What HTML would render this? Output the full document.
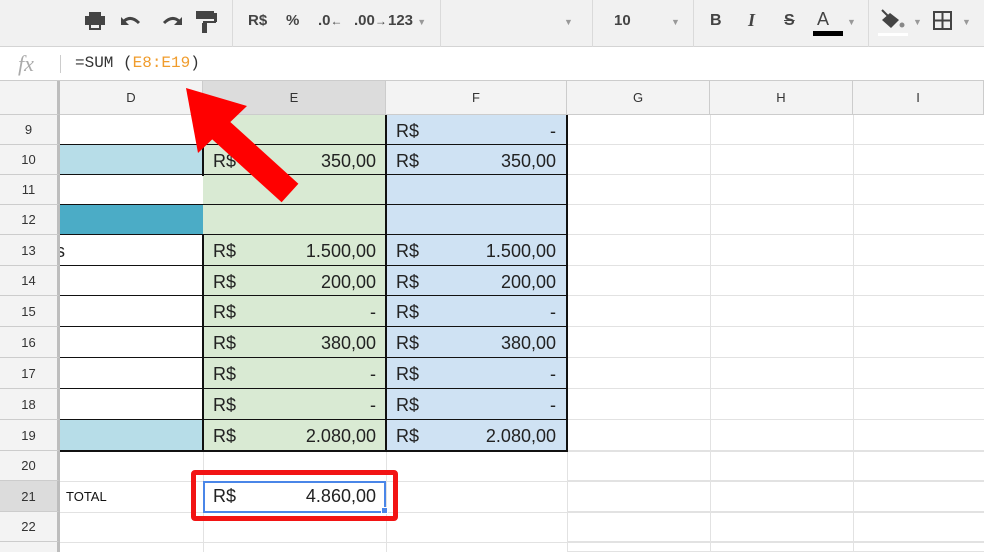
<!DOCTYPE html>
<html style="width:984px;height:552px;overflow:hidden"><head><meta charset="utf-8"><style>
*{margin:0;padding:0;box-sizing:border-box}
body{width:984px;height:552px;overflow:hidden;background:#fff;font-family:"Liberation Sans",Arial,sans-serif;position:relative}
.a{position:absolute}
.tb{left:0;top:0;width:984px;height:47px;background:#f1f1f1;border-bottom:1px solid #d4d4d4}
.sep{position:absolute;top:0;width:1px;height:47px;background:#dadada}
.ti{position:absolute;top:12px;font-size:15px;font-weight:bold;color:#444}
.fb{left:0;top:47px;width:984px;height:34px;background:#fff;border-bottom:1px solid #ccc}
.ch{top:81px;height:34px;background:#f3f3f3;border-right:1px solid #ccc;border-bottom:1px solid #ccc;text-align:center;line-height:34px;font-size:13px;color:#333}
.rh{left:0;width:60px;background:#f3f3f3;border-bottom:1px solid #ccc;border-right:3px solid #bdbdbd;text-align:center;font-size:13px;color:#333}
.c{font-size:18px;color:#222}
.hl{position:absolute;height:1px;background:#e2e2e2}
.vl{position:absolute;width:1px;background:#e2e2e2}
.bk{position:absolute;background:#111}
#clip{position:absolute;left:0;top:0;width:984px;height:552px;overflow:hidden}
</style></head><body><div id="clip">
<div class="a tb"></div>
<div class="sep" style="left:232px"></div><div class="sep" style="left:440px"></div><div class="sep" style="left:592px"></div><div class="sep" style="left:693px"></div><div class="sep" style="left:868px"></div>
<svg class="a" style="left:84px;top:10px" width="140" height="26" viewBox="0 0 140 26">
<rect x="1" y="6" width="20" height="9" fill="#444"/><rect x="5" y="2" width="12" height="4" fill="#444"/><rect x="5" y="13" width="12" height="7" fill="#444"/><rect x="7" y="15" width="8" height="3" fill="#f1f1f1"/>
<path d="M40 11 Q47 5 55 13" stroke="#444" stroke-width="3" fill="none"/><path d="M37 7 L37 15 L45 15Z" fill="#444"/>
<path d="M95 11 Q88 5 80 13" stroke="#444" stroke-width="3" fill="none"/><path d="M98 7 L98 15 L90 15Z" fill="#444"/>
<rect x="112" y="1" width="18" height="8" fill="#444"/><rect x="130" y="3" width="3" height="9" fill="#444"/><rect x="119" y="11" width="13" height="2" fill="#444"/><rect x="118" y="13" width="5" height="10" fill="#444"/>
</svg>
<div class="ti" style="left:248px">R$</div><div class="ti" style="left:286px">%</div>
<div class="ti" style="left:318px">.0<span style="font-size:12px">←</span></div><div class="ti" style="left:354px">.00<span style="font-size:12px">→</span></div>
<div class="ti" style="left:388px">123 <span style="color:#999;font-size:9px">▼</span></div>
<div class="ti" style="left:564px;color:#999;font-size:9px;top:17px">▼</div>
<div class="ti" style="left:614px">10</div><div class="ti" style="left:671px;color:#999;font-size:9px;top:17px">▼</div>
<div class="ti" style="left:710px;font-size:16px">B</div>
<div class="ti" style="left:748px;font-family:'Liberation Serif';font-style:italic;font-size:18px;top:10px">I</div>
<div class="ti" style="left:784px;text-decoration:line-through;font-size:16px">S</div>
<div class="ti" style="left:817px;font-weight:normal;font-size:18px;top:9px">A</div>
<div class="a" style="left:813px;top:31px;width:30px;height:5px;background:#000"></div>
<div class="ti" style="left:847px;color:#999;font-size:9px;top:17px">▼</div>
<svg class="a" style="left:878px;top:8px" width="30" height="28"><path d="M4 12 L12 5 L21 12 L13 20Z" fill="#444"/><path d="M4 2 L10 8" stroke="#444" stroke-width="2"/><circle cx="24" cy="17" r="2.5" fill="#888"/><rect x="0" y="25" width="30" height="4" fill="#fff"/></svg>
<div class="ti" style="left:913px;color:#999;font-size:9px;top:17px">▼</div>
<svg class="a" style="left:933px;top:11px" width="20" height="20"><rect x="1" y="1" width="17" height="17" fill="none" stroke="#444" stroke-width="2"/><path d="M9.5 1V18M1 9.5H18" stroke="#444" stroke-width="2"/></svg>
<div class="ti" style="left:962px;color:#999;font-size:9px;top:17px">▼</div>
<div class="a fb"></div>
<div class="a" style="left:18px;top:51px;font-family:'Liberation Serif';font-style:italic;font-size:22px;color:#aaa">fx</div>
<div class="a" style="left:60px;top:55px;width:1px;height:18px;background:#ccc"></div>
<div class="a" style="left:75px;top:54px;font-family:'Liberation Mono',monospace;font-size:16px;color:#333">=SUM (<span style="color:#f09c2c">E8:E19</span>)</div>
<div class="a ch" style="left:0;width:60px;border-right:3px solid #bdbdbd"></div>
<div class="a ch" style="left:60px;width:143px">D</div>
<div class="a ch" style="left:203px;width:183px;background:#dcdcdc">E</div>
<div class="a ch" style="left:386px;width:181px">F</div>
<div class="a ch" style="left:567px;width:143px">G</div>
<div class="a ch" style="left:710px;width:143px">H</div>
<div class="a ch" style="left:853px;width:131px">I</div>
<div class="vl" style="left:567px;top:115px;height:437px"></div><div class="vl" style="left:710px;top:115px;height:437px"></div><div class="vl" style="left:853px;top:115px;height:437px"></div>
<div class="vl" style="left:203px;top:451px;height:101px"></div><div class="vl" style="left:386px;top:451px;height:101px"></div>
<div class="hl" style="left:60px;width:924px;top:481px"></div><div class="hl" style="left:60px;width:924px;top:512px"></div><div class="hl" style="left:60px;width:924px;top:542px"></div><div class="hl" style="left:60px;width:924px;top:451px"></div>
<div id="rows"></div>
<script>
var ys=[115,145,175,205,235,266,296,327,358,389,420,451,481,512,542,552];
var h='';
var E=['','350,00','','','1.500,00','200,00','-','380,00','-','-','2.080,00'];
var F=['-','350,00','','','1.500,00','200,00','-','380,00','-','-','2.080,00'];
for(var i=0;i<15;i++){var y=ys[i],hh=ys[i+1]-y,r=9+i;
var hx=(r==23)?30:hh;
h+='<div class="a rh" style="top:'+y+'px;height:'+hx+'px;line-height:'+hx+'px;'+(r==21?'background:#dcdcdc':'')+'">'+r+'</div>';
h+='<div class="hl" style="left:567px;width:417px;top:'+(y+hh-1)+'px"></div>';
if(i<11){
var dc=(r==10||r==19)?'#b7dde8':(r==12?'#4bacc6':'#fff');
h+='<div class="a" style="left:60px;top:'+y+'px;width:143px;height:'+hh+'px;background:'+dc+'"></div>';
h+='<div class="a" style="left:203px;top:'+y+'px;width:183px;height:'+hh+'px;background:#d9ead3"></div>';
h+='<div class="a" style="left:386px;top:'+y+'px;width:181px;height:'+hh+'px;background:#cfe2f3"></div>';
if(E[i])h+='<div class="a c" style="left:213px;top:'+(y+6)+'px">R$</div><div class="a c" style="right:'+(984-376)+'px;top:'+(y+6)+'px">'+E[i]+'</div>';
if(F[i])h+='<div class="a c" style="left:396px;top:'+(y+6)+'px">R$</div><div class="a c" style="right:'+(984-556)+'px;top:'+(y+6)+'px">'+F[i]+'</div>';
h+='<div class="bk" style="left:60px;width:508px;height:2px;top:'+(y+hh-1)+'px"></div>';
}}
h+='<div class="bk" style="left:385px;width:2px;top:115px;height:337px"></div>';
h+='<div class="bk" style="left:566px;width:2px;top:115px;height:337px"></div>';
h+='<div class="bk" style="left:202px;width:2px;top:145px;height:31px"></div>';
h+='<div class="bk" style="left:202px;top:235px;width:2px;height:217px"></div>';
document.getElementById('rows').innerHTML=h;
</script>
<div class="a c" style="left:60px;top:241px;width:10px;overflow:hidden;text-indent:-4px">s</div>
<div class="a" style="left:66px;top:489px;font-size:13px;color:#111">TOTAL</div>
<div class="a" style="left:203px;top:481px;width:183px;height:32px;border:2px solid #4a86e8"></div>
<div class="a" style="left:381px;top:507px;width:7px;height:7px;background:#4a86e8;border:1px solid #fff"></div>
<div class="a c" style="left:213px;top:486px">R$</div><div class="a c" style="right:608px;top:486px">4.860,00</div>
<div class="a" style="left:191px;top:470px;width:207px;height:51px;border:5px solid #f21414;border-radius:4px"></div>
<svg class="a" style="left:0;top:0" width="984" height="552"><path d="M186 88 L247 106 L198 153Z" fill="#f00"/><path d="M215 125 L290 193" stroke="#f00" stroke-width="25"/></svg>
</div></body></html>
